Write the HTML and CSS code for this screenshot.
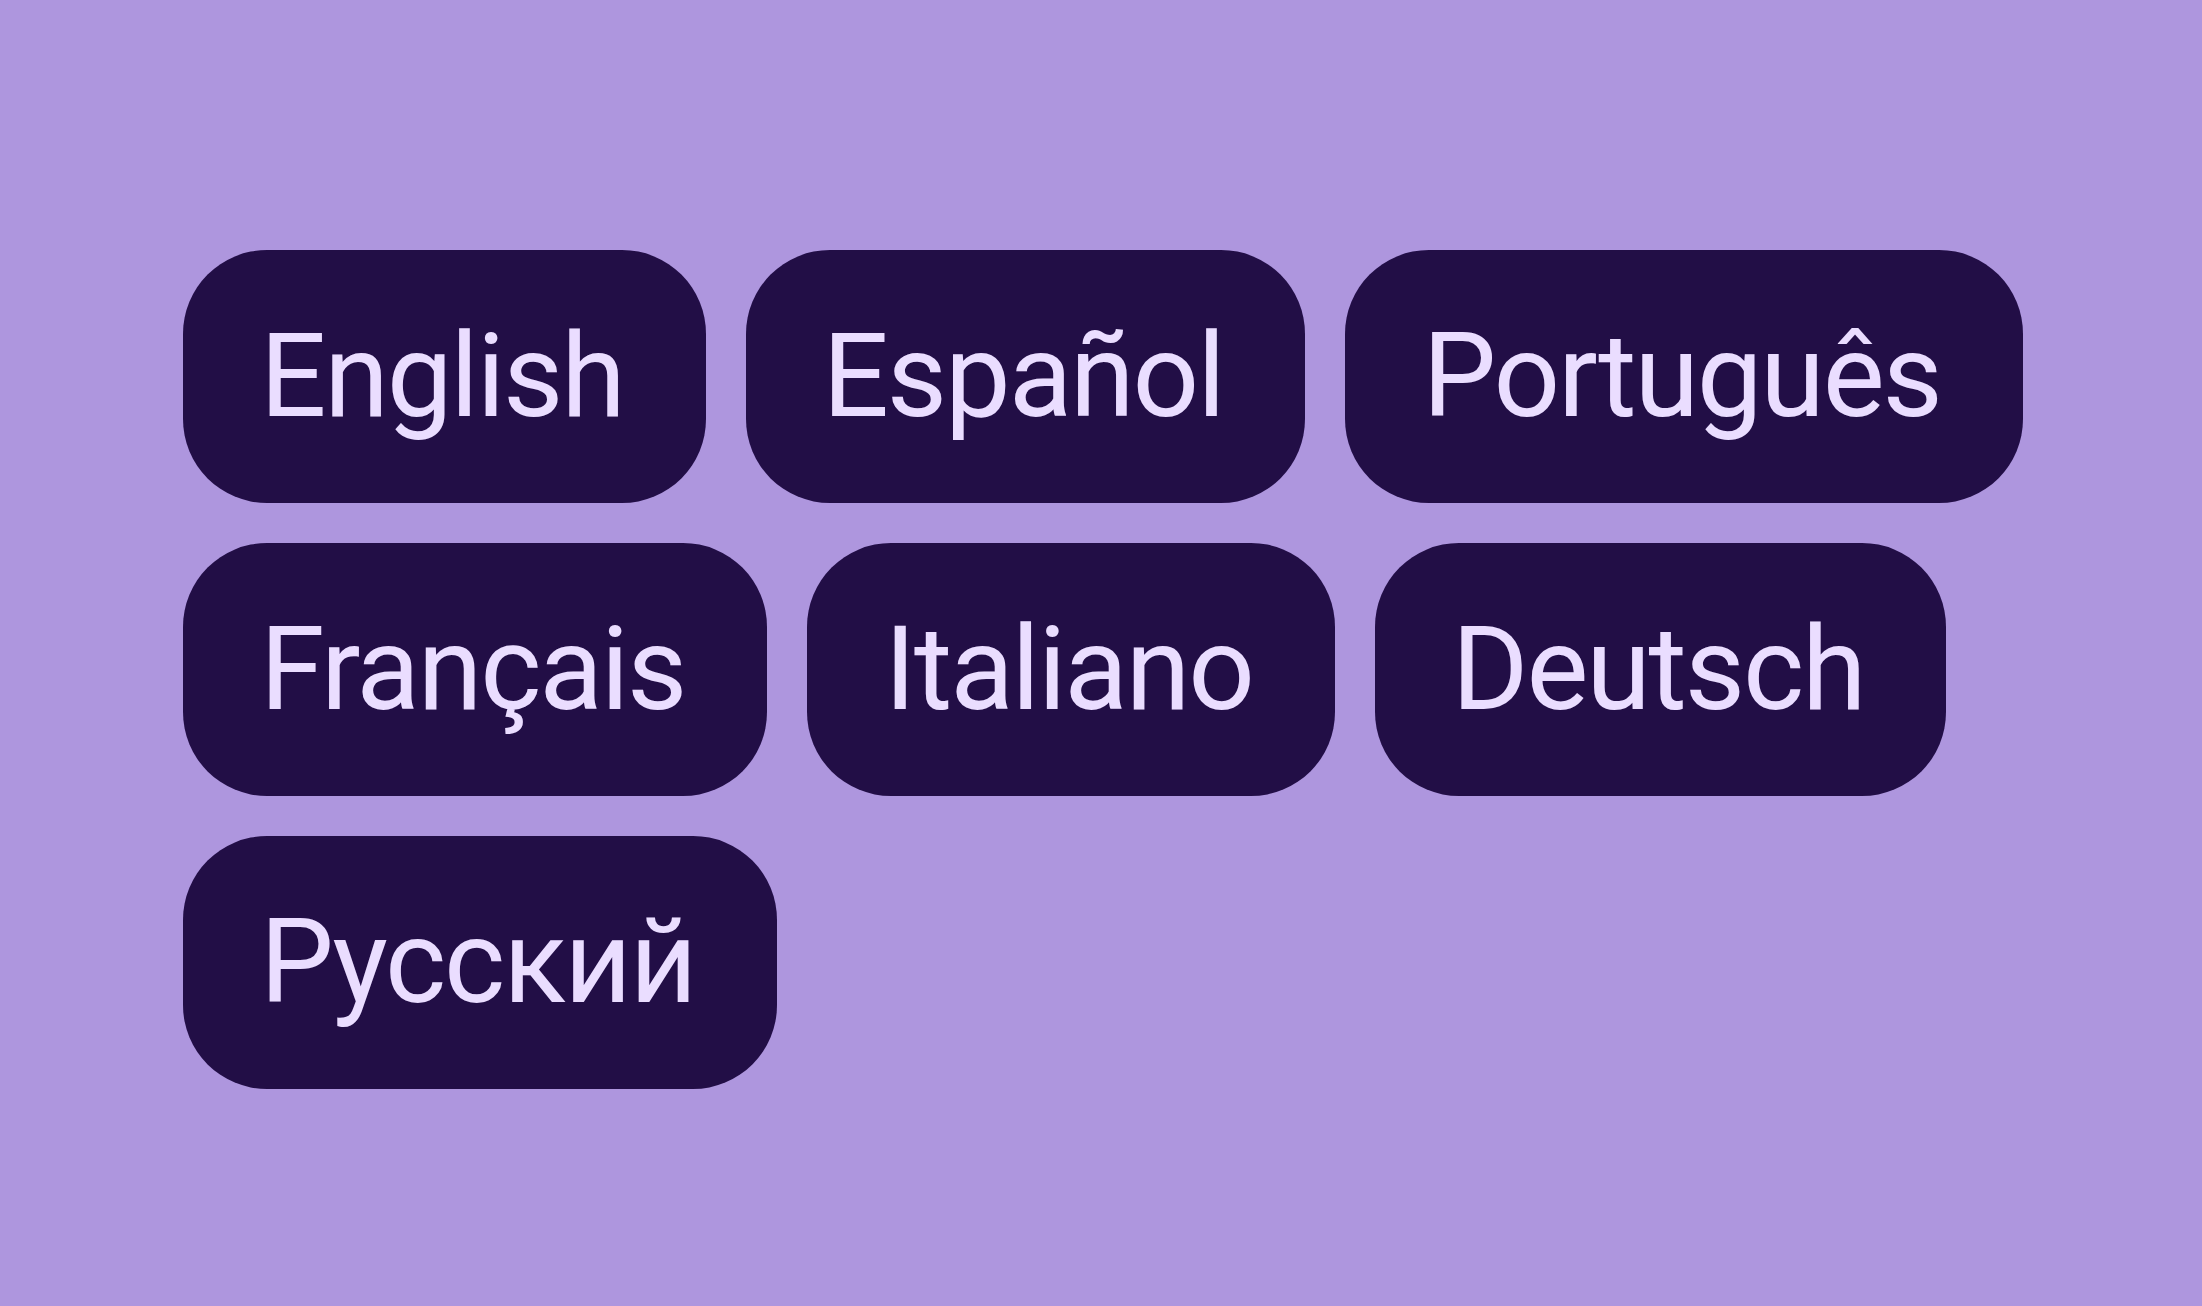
FILE: index.html
```html
<!DOCTYPE html>
<html lang="en">
<head>
<meta charset="utf-8">
<title>Languages</title>
<link rel="stylesheet" href="styles.css">
</head>
<body>
<div class="chips">
  <div class="chip">English</div>
  <div class="chip">Español</div>
  <div class="chip">Português</div>
  <div class="chip">Français</div>
  <div class="chip">Italiano</div>
  <div class="chip">Deutsch</div>
  <div class="chip">Русский</div>
</div>
</body>
</html>
```
FILE: styles.css
```css
html, body {
  margin: 0;
  padding: 0;
  background: #ae96de;
}
body {
  width: 2202px;
  height: 1306px;
  overflow: hidden;
  font-family: Roboto, "Noto Sans", sans-serif;
}
.chips {
  display: flex;
  flex-wrap: wrap;
  gap: 40px;
  width: 1950px;
  padding: 250px 0 0 183px;
}
.chip {
  background: #220e46;
  color: #eaddff;
  font-size: 117px;
  line-height: 137px;
  letter-spacing: -2.15px;
  padding: 58px 82px 58px 77px;
  border-radius: 84px;
  white-space: nowrap;
}
```
